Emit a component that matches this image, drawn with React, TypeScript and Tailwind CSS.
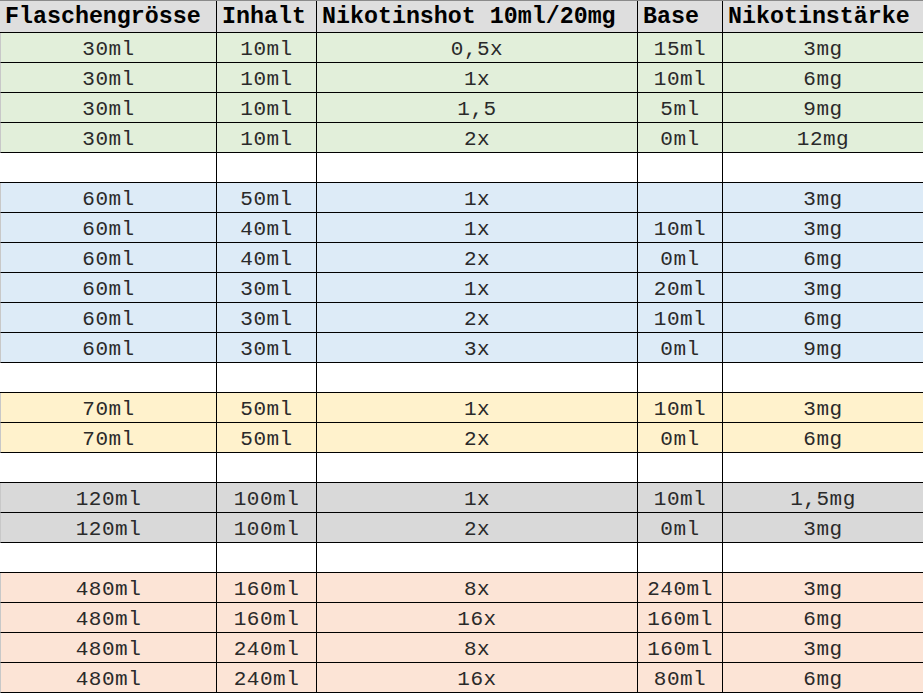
const ROWS: (string[] | null)[] = [
  ["30ml", "10ml", "0,5x", "15ml", "3mg"],
  ["30ml", "10ml", "1x", "10ml", "6mg"],
  ["30ml", "10ml", "1,5", "5ml", "9mg"],
  ["30ml", "10ml", "2x", "0ml", "12mg"],
  null,
  ["60ml", "50ml", "1x", "", "3mg"],
  ["60ml", "40ml", "1x", "10ml", "3mg"],
  ["60ml", "40ml", "2x", "0ml", "6mg"],
  ["60ml", "30ml", "1x", "20ml", "3mg"],
  ["60ml", "30ml", "2x", "10ml", "6mg"],
  ["60ml", "30ml", "3x", "0ml", "9mg"],
  null,
  ["70ml", "50ml", "1x", "10ml", "3mg"],
  ["70ml", "50ml", "2x", "0ml", "6mg"],
  null,
  ["120ml", "100ml", "1x", "10ml", "1,5mg"],
  ["120ml", "100ml", "2x", "0ml", "3mg"],
  null,
  ["480ml", "160ml", "8x", "240ml", "3mg"],
  ["480ml", "160ml", "16x", "160ml", "6mg"],
  ["480ml", "240ml", "8x", "160ml", "3mg"],
  ["480ml", "240ml", "16x", "80ml", "6mg"],
];

const HEAD = ["Flaschengrösse", "Inhalt", "Nikotinshot 10ml/20mg", "Base", "Nikotinstärke"];

function rowBg(size: string) {
  if (size === "30ml") return "bg-[#e2efda]";
  if (size === "60ml") return "bg-[#ddebf7]";
  if (size === "70ml") return "bg-[#fff2cc]";
  if (size === "120ml") return "bg-[#d9d9d9]";
  return "bg-[#fce4d6]";
}

export default function App() {
  return (
    <div className="h-[693px] w-[923px] overflow-hidden bg-white font-['Courier_New','Liberation_Mono',monospace]">
      <div className="grid grid-cols-[217px_100px_321px_85px_200px] border-t border-[#8a8a8a]">
        {HEAD.map((h, i) => (
          <div
            key={h}
            className={`flex h-[32px] items-center whitespace-nowrap border-b border-black bg-[#dedede] pl-[5px] pt-[1px] text-[23.3px] font-bold text-black ${i < 4 ? "border-r" : ""}`}
          >
            {h}
          </div>
        ))}
        {ROWS.map((row, r) =>
          row ? (
            row.map((c, i) => (
              <div
                key={`${r}-${i}`}
                className={`flex h-[30px] items-center justify-center whitespace-nowrap border-b border-black pt-[4px] text-[21px] tracking-[0.5px] text-[#2a2a2a] ${rowBg(row[0])} ${i < 4 ? "border-r" : ""} ${i === 0 ? "border-l border-l-[#c8c8c8]" : ""}`}
              >
                {c}
              </div>
            ))
          ) : (
            [0, 1, 2, 3, 4].map((i) => (
              <div
                key={`${r}-${i}`}
                className={`h-[30px] border-b border-black bg-white ${i < 4 ? "border-r" : ""}`}
              />
            ))
          )
        )}
      </div>
    </div>
  );
}
